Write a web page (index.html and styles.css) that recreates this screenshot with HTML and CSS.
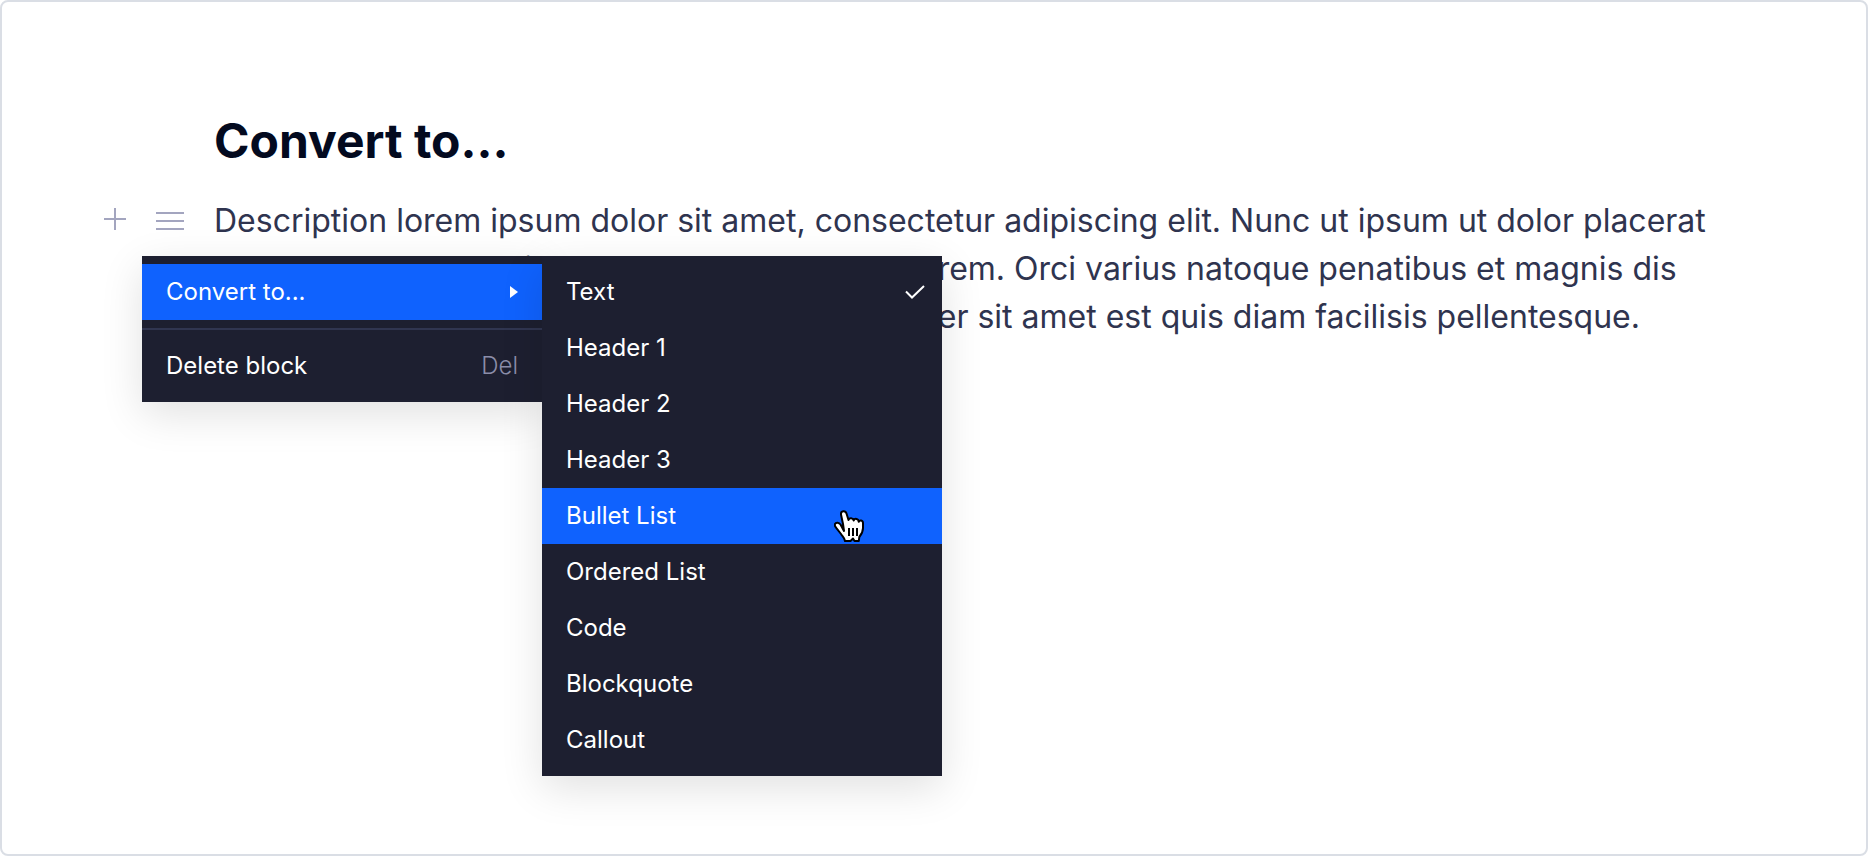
FILE: index.html
```html
<!DOCTYPE html>
<html lang="en">
<head>
    <meta charset="UTF-8">
    <title>Convert to...</title>
    <link rel="stylesheet" href="styles.css">
</head>
<body>
    <main class="page">
        <h1 class="title">Convert to...</h1>

        <div class="block">
            <div class="block-tools">
                <button class="tool tool-add" type="button" aria-label="Add block">
                    <svg width="22" height="24" viewBox="0 0 22 24"><path d="M0 11h22M11 0v22" stroke="#a3a5bf" stroke-width="2"/></svg>
                </button>
                <button class="tool tool-menu" type="button" aria-label="Block menu" aria-haspopup="menu" aria-expanded="true">
                    <svg width="28" height="24" viewBox="0 0 28 24"><path d="M0 5h28M0 13h28M0 21h28" stroke="#a3a5bf" stroke-width="2"/></svg>
                </button>
            </div>

            <p class="block-text">Description lorem ipsum dolor sit amet, consectetur adipiscing elit. Nunc ut ipsum ut dolor placerat congue nec ac mauris. Fusce semper tempus lorem. Orci varius natoque penatibus et magnis dis parturient montes, nascetur ridiculus mus. Integer sit amet est quis diam facilisis pellentesque.</p>

            <div class="menu block-menu" role="menu">
                <button class="menu-item active" type="button" role="menuitem" aria-haspopup="menu">
                    Convert to...
                    <svg class="arrow" width="8" height="12" viewBox="0 0 8 12"><path d="M0 0l8 6-8 6z" fill="#fff"/></svg>
                </button>
                <hr class="separator">
                <button class="menu-item" type="button" role="menuitem">Delete block <span class="shortcut">Del</span></button>

                <div class="menu submenu" role="menu">
                    <button class="menu-item checked" type="button" role="menuitem">
                        Text
                        <svg width="20" height="14" viewBox="0 0 20 14"><path d="M1 6.500l6 6L19 1" fill="none" stroke="#fff" stroke-width="2"/></svg>
                    </button>
                    <button class="menu-item" type="button" role="menuitem">Header 1</button>
                    <button class="menu-item" type="button" role="menuitem">Header 2</button>
                    <button class="menu-item" type="button" role="menuitem">Header 3</button>
                    <button class="menu-item active" type="button" role="menuitem">
                        Bullet List
                        <svg class="pointer" width="30" height="32" viewBox="0 0 30 32">
                            <path d="M10 21L6.500 14.500C5 12.500 2 12 1 14c-.6 1.300 0 2.500 1.200 3.800L7 24c1.500 2.500 3.500 3.500 4 7h5.500l2.500-2.500 1.500 2.500h4.300l.5-4c2.500-3 3.700-6 3.700-9v-5c0-3-3.500-3.300-4.300-1.200 0-3.500-4.200-3.800-5-1.300-.5-2.700-4.300-3-5.200-.5L12.500 3.500C11.500 0 6.500.5 7 4.500l2 9.500z" fill="#fff" stroke="#000" stroke-width="2" stroke-linejoin="round"/>
                            <path d="M15 18v8M19 18v8M23 18v8" stroke="#000" stroke-width="2"/>
                        </svg>
                    </button>
                    <button class="menu-item" type="button" role="menuitem">Ordered List</button>
                    <button class="menu-item" type="button" role="menuitem">Code</button>
                    <button class="menu-item" type="button" role="menuitem">Blockquote</button>
                    <button class="menu-item" type="button" role="menuitem">Callout</button>
                </div>
            </div>
        </div>
    </main>
</body>
</html>
```
FILE: styles.css
```css
* {
    box-sizing: border-box;
}

body {
    margin: 0;
    background: #fff;
    font-family: Inter, "Liberation Sans", sans-serif;
}

.page {
    min-height: 100vh;
    padding: 111px 140px 60px 100px;
    border: 2px solid #dadee5;
    border-radius: 8px;
}

.title {
    margin: 0 0 28px 112px;
    color: #030a1f;
    font-size: 48px;
    line-height: 56px;
    font-weight: 700;
}

.block {
    position: relative;
    display: grid;
    grid-template-columns: 112px 1fr;
}

.block-tools {
    display: flex;
    align-items: center;
    gap: 26px;
    height: 46px;
}

.tool {
    display: flex;
    justify-content: center;
    padding: 0;
    border: 0;
    background: none;
}

.tool-add {
    width: 26px;
}

.tool-menu {
    width: 32px;
}

.block-text {
    margin: 0;
    color: #2f344f;
    font-size: 32px;
    line-height: 48px;
}

.menu {
    position: absolute;
    width: 400px;
    padding: 8px 0;
    background: #1d1f30;
    box-shadow: 0 12px 40px rgba(0, 0, 0, 0.12);
}

.block-menu {
    top: 59px;
    left: 40px;
}

.submenu {
    top: 0;
    left: 100%;
}

.menu-item {
    position: relative;
    display: flex;
    align-items: center;
    justify-content: space-between;
    width: 100%;
    height: 56px;
    padding: 0 24px;
    border: 0;
    background: none;
    color: #fff;
    font: 400 24px/32px Inter, "Liberation Sans", sans-serif;
    text-align: left;
    cursor: pointer;
}

.menu-item.active {
    background: #0f62fe;
}

.menu-item.checked {
    padding-right: 17px;
}

.separator {
    height: 2px;
    margin: 8px 0;
    border: 0;
    background: #303550;
}

.shortcut {
    color: #8b8da9;
    font-weight: 300;
}

.pointer {
    position: absolute;
    top: 22px;
    right: 78px;
}
```
